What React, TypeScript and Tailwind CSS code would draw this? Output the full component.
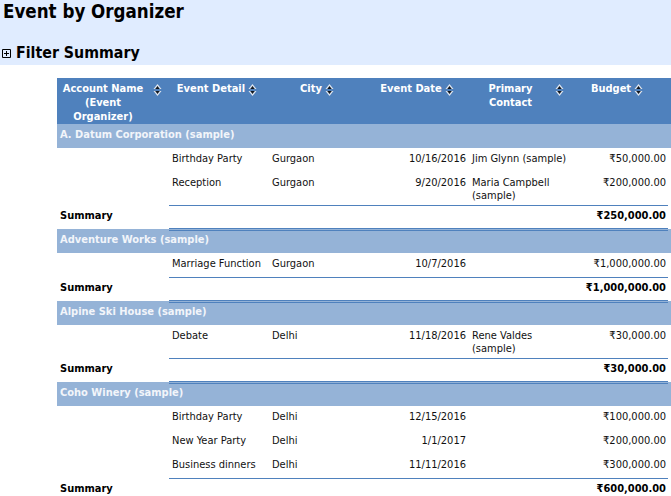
const font = "[font-family:'DejaVu_Sans',sans-serif] [font-stretch:condensed]"

type Row = { detail: string; city: string; date: string; contact?: string; budget: string; tall?: boolean }
type Group = { name: string; rows: Row[]; total: string }

const groups: Group[] = [
  {
    name: "A. Datum Corporation (sample)",
    total: "₹250,000.00",
    rows: [
      { detail: "Birthday Party", city: "Gurgaon", date: "10/16/2016", contact: "Jim Glynn (sample)", budget: "₹50,000.00" },
      { detail: "Reception", city: "Gurgaon", date: "9/20/2016", contact: "Maria Campbell (sample)", budget: "₹200,000.00", tall: true },
    ],
  },
  {
    name: "Adventure Works (sample)",
    total: "₹1,000,000.00",
    rows: [{ detail: "Marriage Function", city: "Gurgaon", date: "10/7/2016", budget: "₹1,000,000.00" }],
  },
  {
    name: "Alpine Ski House (sample)",
    total: "₹30,000.00",
    rows: [{ detail: "Debate", city: "Delhi", date: "11/18/2016", contact: "Rene Valdes (sample)", budget: "₹30,000.00", tall: true }],
  },
  {
    name: "Coho Winery (sample)",
    total: "₹600,000.00",
    rows: [
      { detail: "Birthday Party", city: "Delhi", date: "12/15/2016", budget: "₹100,000.00" },
      { detail: "New Year Party", city: "Delhi", date: "1/1/2017", budget: "₹200,000.00" },
      { detail: "Business dinners", city: "Delhi", date: "11/11/2016", budget: "₹300,000.00" },
    ],
  },
]

function SortIcon() {
  return (
    <svg width="9" height="14" viewBox="0 0 9 14" className="mt-[1px] shrink-0">
      <path d="M4.5 1 L8.5 6 H.5 Z" fill="#dfe6f0" />
      <path d="M4.5 3 L6.8 6 H2.2 Z" fill="#10161f" />
      <path d="M.5 8 H8.5 L4.5 13 Z" fill="#dfe6f0" />
      <path d="M2.2 8 H6.8 L4.5 11 Z" fill="#10161f" />
    </svg>
  )
}

const cols = "grid w-[614px] grid-cols-[112px_100px_100px_100px_100px_102px]"

export default function App() {
  return (
    <div className={`${font} h-[496px] w-[671px] overflow-hidden bg-white text-[11px] leading-[13px] text-[#111]`}>
      <div className="h-[65px] bg-[#e0ecff] text-black">
        <h1 className="pl-[3px] pt-[1px] text-[18.6px] font-bold leading-[22px]">Event by Organizer</h1>
        <div className="flex items-center gap-[5px] pl-[2px] pt-[20px]">
          <svg width="9" height="9" viewBox="0 0 9 9">
            <path d="M.5.5h8v8h-8zM2 4.5h5M4.5 2v5" fill="none" stroke="#000" />
          </svg>
          <h2 className="text-[15.8px] font-bold leading-[20px]">Filter Summary</h2>
        </div>
      </div>

      <div className="ml-[57px] mt-[13px]">
        <div className={`${cols} h-[46px] bg-[#4f81bd] pt-[4px] font-bold text-white`}>
          <div className="flex justify-start gap-[8px] pl-[4px]">
            <span className="w-[84px] text-center leading-[14px]">Account Name (Event Organizer)</span>
            <SortIcon />
          </div>
          <div className="flex justify-center gap-[3px] pr-[4px]">
            <span className="leading-[14px]">Event Detail</span>
            <SortIcon />
          </div>
          <div className="flex justify-center gap-[3px] pr-[4px]">
            <span className="leading-[14px]">City</span>
            <SortIcon />
          </div>
          <div className="flex justify-center gap-[3px] pr-[4px]">
            <span className="leading-[14px]">Event Date</span>
            <SortIcon />
          </div>
          <div className="flex justify-center gap-[16px] pl-[8px]">
            <span className="w-[56px] text-center leading-[14px]">Primary Contact</span>
            <SortIcon />
          </div>
          <div className="flex justify-center gap-[3px] pr-[6px]">
            <span className="leading-[14px]">Budget</span>
            <SortIcon />
          </div>
        </div>

        {groups.map((g, i) => (
          <div key={g.name}>
            <div className="relative flex h-[24px] w-[614px] items-start bg-[#95b3d7] pl-[3px] pt-[4px] font-bold text-[#f2f5fa]">
              {g.name}
              {i > 0 && <div className="absolute left-[112px] right-[3px] top-[1px] h-[1px] bg-[#4f81bd]" />}
            </div>
            {g.rows.map((r) => (
              <div key={r.detail} className={`${cols} ${r.tall ? "h-[33px]" : "h-[24px]"} pt-[4px]`}>
                <div />
                <div className="pl-[3px]">{r.detail}</div>
                <div className="pl-[3px]">{r.city}</div>
                <div className="pr-[3px] text-right">{r.date}</div>
                <div className="pl-[3px]">{r.contact}</div>
                <div className="pr-[5px] text-right">{r.budget}</div>
              </div>
            ))}
            <div className={`${cols} h-[24px] font-bold text-black`}>
              <div className="pl-[3px] pt-[4px]">Summary</div>
              <div className="col-span-5 mr-[3px] flex justify-end border-y border-[#4f81bd] pr-[2px] pt-[3px]">
                {g.total}
              </div>
            </div>
          </div>
        ))}
      </div>
    </div>
  )
}
